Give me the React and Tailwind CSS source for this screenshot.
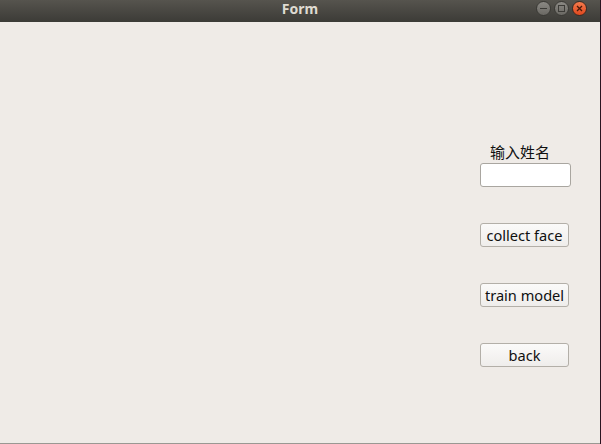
import React from "react";

const ui = { fontFamily: '"Noto Sans", "Noto Sans CJK SC", sans-serif' };

function WinButton({ kind }) {
  if (kind === "close") {
    return (
      <div className="w-[15px] h-[15px] rounded-full bg-gradient-to-b from-[#f47a4c] to-[#e0471d] border border-[#3a2a22] flex items-center justify-center">
        <svg width="7" height="7" viewBox="0 0 7 7">
          <path d="M1 1l5 5M6 1L1 6" stroke="#4a1a0a" strokeWidth="1.3" />
        </svg>
      </div>
    );
  }
  return (
    <div className="w-[15px] h-[15px] rounded-full bg-gradient-to-b from-[#8b8984] to-[#6a6863] border border-[#3a3935] flex items-center justify-center">
      {kind === "min" ? (
        <div className="w-[7px] h-[1.5px] bg-[#3c3b37]" />
      ) : (
        <div className="w-[7px] h-[7px] border border-[#3c3b37]" />
      )}
    </div>
  );
}

function Button({ children }) {
  return (
    <button
      className="w-[89px] h-[24px] rounded-[3px] border border-[#b3afa8] bg-gradient-to-b from-[#fbfaf9] to-[#efedeb] text-[14.6px] text-[#101010] leading-none flex items-center justify-center"
      style={ui}
    >
      {children}
    </button>
  );
}

export default function App() {
  return (
    <div className="w-[601px] h-[444px] flex flex-col bg-[#efebe7] overflow-hidden border-r border-[#2a1420]" style={ui}>
      <div className="h-[22px] shrink-0 bg-gradient-to-b from-[#56544e] to-[#3c3b37] flex items-start relative">
        <div className="flex-1 text-center text-[14px] font-bold text-[#dfdbd2] leading-[17px]">
          Form
        </div>
        <div className="absolute right-[13px] top-[1px] flex gap-[3px]">
          <WinButton kind="min" />
          <WinButton kind="max" />
          <WinButton kind="close" />
        </div>
      </div>
      <div className="flex-1 flex border-b border-[#9a9893]">
        <div className="ml-[480px] pt-[120px] flex flex-col">
          <div className="h-[21px] pl-[10px] text-[15px] text-[#101010] leading-[21px]">
            输入姓名
          </div>
          <input
            className="w-[91px] h-[24px] rounded-[3px] border border-[#a9a6a0] bg-white outline-none"
            style={ui}
          />
          <div className="mt-[36px] flex flex-col gap-[36px]">
            <Button>collect face</Button>
            <Button>train model</Button>
            <Button>back</Button>
          </div>
        </div>
      </div>
    </div>
  );
}
